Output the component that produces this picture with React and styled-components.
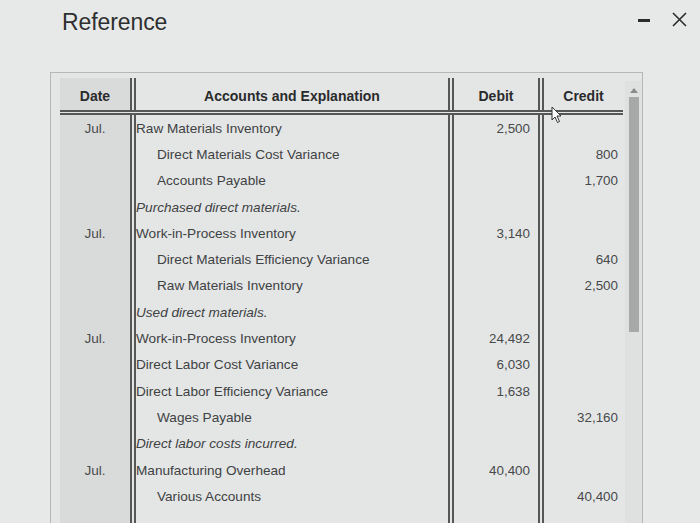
import React from 'react'
import styled, { createGlobalStyle } from 'styled-components'

const GlobalStyle = createGlobalStyle`
  html, body {
    margin: 0;
    background: #e7e9e9;
  }
  body {
    font-family: "Liberation Sans", Arial, sans-serif;
    overflow: hidden;
  }
`

const Page = styled.div`
  position: relative;
  width: 700px;
  height: 523px;
  overflow: hidden;
`

const TopBar = styled.header`
  height: 72px;
  box-sizing: border-box;
  display: flex;
  align-items: flex-start;
  justify-content: space-between;
  padding: 9px 13px 0 62px;
`

const Title = styled.h1`
  margin: 0;
  font-size: 23px;
  font-weight: normal;
  color: #2e2f30;
  letter-spacing: -0.1px;
`

const WindowButtons = styled.div`
  display: flex;
  align-items: center;
  gap: 21px;
  margin-top: 3px;
`

const Panel = styled.section`
  margin-left: 50px;
  width: 593px;
  height: 460px;
  box-sizing: border-box;
  border: 1px solid #b6b8b8;
  border-bottom: none;
  background: #e4e6e6;
  padding: 5px 0 0 9px;
  display: flex;
  overflow: hidden;
`

const Table = styled.div`
  width: 563px;
  display: flex;
  flex-direction: column;
`

const Row = styled.div`
  flex-shrink: 0;
  display: grid;
  grid-template-columns: 70px 318px 90px 85px;
  height: ${({ $head }) => ($head ? '32px' : '26.3px')};
  border-bottom: ${({ $head }) => ($head ? '5px double #555757' : 'none')};
`

const Body = styled.div`
  flex: 1;
  display: flex;
  flex-direction: column;
  overflow: hidden;
`

const Cell = styled.div`
  display: flex;
  align-items: center;
  font-size: 13.6px;
  color: #404243;
  white-space: nowrap;
  border-left: ${({ $line }) => ($line ? '6px double #555757' : 'none')};
`

const DateCell = styled(Cell)`
  justify-content: center;
  background: #d9dbdb;
  color: #4a4c4d;
`

const HeadCell = styled(Cell)`
  justify-content: center;
  font-size: 14px;
  font-weight: bold;
  color: #2a2b2c;
  padding-top: 4px;
  background: ${({ $shade }) => ($shade ? '#d9dbdb' : 'transparent')};
`

const AccountCell = styled(Cell)`
  padding-left: ${({ $indent }) => ($indent ? '21px' : '0')};
  font-style: ${({ $italic }) => ($italic ? 'italic' : 'normal')};
`

const AmountCell = styled(Cell)`
  justify-content: flex-end;
  padding-right: ${({ $pad }) => $pad}px;
  font-size: 13.4px;
  color: #47494a;
`

const Scrollbar = styled.div`
  width: 18px;
  margin: 3px 0 0 2px;
  background: #dfe1e1;
  display: flex;
  flex-direction: column;
  align-items: center;
`

const Arrow = styled.div`
  width: 0;
  height: 0;
  border-left: 4px solid transparent;
  border-right: 4px solid transparent;
  ${({ $down }) =>
    $down ? 'border-top: 5px solid #555;' : 'border-bottom: 5px solid #8a8c8c;'}
  margin: ${({ $down }) => ($down ? 'auto 0 4px' : '7px 0 4px')};
`

const Thumb = styled.div`
  width: 10px;
  height: 235px;
  background: #a7a9a9;
`

const Cursor = styled.svg`
  position: absolute;
  left: 551px;
  top: 106px;
`

const rows = [
  { date: 'Jul.', text: 'Raw Materials Inventory', debit: '2,500' },
  { text: 'Direct Materials Cost Variance', indent: true, credit: '800' },
  { text: 'Accounts Payable', indent: true, credit: '1,700' },
  { text: 'Purchased direct materials.', italic: true },
  { date: 'Jul.', text: 'Work-in-Process Inventory', debit: '3,140' },
  { text: 'Direct Materials Efficiency Variance', indent: true, credit: '640' },
  { text: 'Raw Materials Inventory', indent: true, credit: '2,500' },
  { text: 'Used direct materials.', italic: true },
  { date: 'Jul.', text: 'Work-in-Process Inventory', debit: '24,492' },
  { text: 'Direct Labor Cost Variance', debit: '6,030' },
  { text: 'Direct Labor Efficiency Variance', debit: '1,638' },
  { text: 'Wages Payable', indent: true, credit: '32,160' },
  { text: 'Direct labor costs incurred.', italic: true },
  { date: 'Jul.', text: 'Manufacturing Overhead', debit: '40,400' },
  { text: 'Various Accounts', indent: true, credit: '40,400' },
  { text: '' },
]

const App = () => (
  <Page>
    <GlobalStyle />
    <TopBar>
      <Title>Reference</Title>
      <WindowButtons>
        <svg width="13" height="14" viewBox="0 0 13 14">
          <rect x="0" y="6" width="12" height="3" fill="#2b2c2d" />
        </svg>
        <svg width="15" height="15" viewBox="0 0 15 15">
          <path d="M1 1 L14 14 M14 1 L1 14" stroke="#2b2c2d" strokeWidth="1.6" />
        </svg>
      </WindowButtons>
    </TopBar>

    <Panel>
      <Table>
        <Row $head>
          <HeadCell $shade>Date</HeadCell>
          <HeadCell $line>Accounts and Explanation</HeadCell>
          <HeadCell $line>Debit</HeadCell>
          <HeadCell $line>Credit</HeadCell>
        </Row>
        <Body>
          {rows.map((r, i) => (
            <Row key={i}>
              <DateCell>{r.date}</DateCell>
              <AccountCell $line $indent={r.indent} $italic={r.italic}>
                {r.text}
              </AccountCell>
              <AmountCell $line $pad={8}>{r.debit}</AmountCell>
              <AmountCell $line $pad={5}>{r.credit}</AmountCell>
            </Row>
          ))}
        </Body>
      </Table>
      <Scrollbar>
        <Arrow />
        <Thumb />
        <Arrow $down />
      </Scrollbar>
    </Panel>

    <Cursor width="12" height="18" viewBox="0 0 12 18">
      <path
        d="M1 1 L1 14 L4 11 L6.5 16.5 L8.5 15.5 L6 10 L10 10 Z"
        fill="#ffffff"
        stroke="#333"
        strokeWidth="1"
        strokeLinejoin="round"
      />
    </Cursor>
  </Page>
)

export default App
